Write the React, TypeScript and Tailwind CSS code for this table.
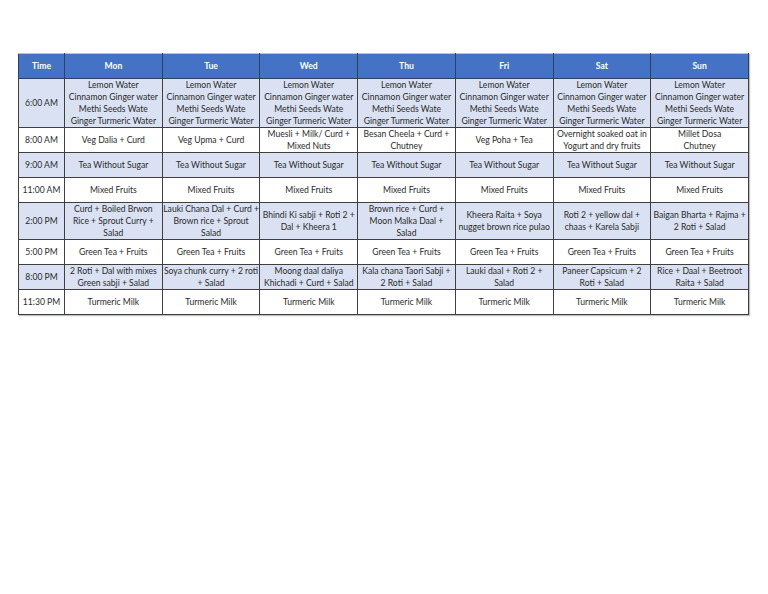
import React from 'react';

const days = ['Mon', 'Tue', 'Wed', 'Thu', 'Fri', 'Sat', 'Sun'];

const morningDrink = ['Lemon Water', 'Cinnamon Ginger water', 'Methi Seeds Wate', 'Ginger Turmeric Water'];

type Row = { time: string; h: string; shaded: boolean; cells: string[][] };

const rows: Row[] = [
  { time: '6:00 AM', h: 'h-[49px]', shaded: true, cells: days.map(() => morningDrink) },
  {
    time: '8:00 AM',
    h: 'h-[25px]',
    shaded: false,
    cells: [
      ['Veg Dalia + Curd'],
      ['Veg Upma + Curd'],
      ['Muesli + Milk/ Curd +', 'Mixed Nuts'],
      ['Besan Cheela + Curd +', 'Chutney'],
      ['Veg Poha + Tea'],
      ['Overnight soaked oat in', 'Yogurt and dry fruits'],
      ['Millet Dosa', 'Chutney'],
    ],
  },
  { time: '9:00 AM', h: 'h-[25px]', shaded: true, cells: days.map(() => ['Tea Without Sugar']) },
  { time: '11:00 AM', h: 'h-[25px]', shaded: false, cells: days.map(() => ['Mixed Fruits']) },
  {
    time: '2:00 PM',
    h: 'h-[37px]',
    shaded: true,
    cells: [
      ['Curd + Boiled Brwon', 'Rice + Sprout Curry +', 'Salad'],
      ['Lauki Chana Dal + Curd +', 'Brown rice + Sprout', 'Salad'],
      ['Bhindi Ki sabji + Roti 2 +', 'Dal + Kheera 1'],
      ['Brown rice + Curd +', 'Moon Malka Daal +', 'Salad'],
      ['Kheera Raita + Soya', 'nugget brown rice pulao'],
      ['Roti 2 + yellow dal +', 'chaas + Karela Sabji'],
      ['Baigan Bharta + Rajma +', '2 Roti + Salad'],
    ],
  },
  { time: '5:00 PM', h: 'h-[25px]', shaded: false, cells: days.map(() => ['Green Tea + Fruits']) },
  {
    time: '8:00 PM',
    h: 'h-[25px]',
    shaded: true,
    cells: [
      ['2 Roti + Dal with mixes', 'Green sabji + Salad'],
      ['Soya chunk curry + 2 roti', '+ Salad'],
      ['Moong daal daliya', 'Khichadi + Curd + Salad'],
      ['Kala chana Taori Sabji +', '2 Roti + Salad'],
      ['Lauki daal + Roti 2 +', 'Salad'],
      ['Paneer Capsicum + 2', 'Roti + Salad'],
      ['Rice + Daal + Beetroot', 'Raita + Salad'],
    ],
  },
  { time: '11:30 PM', h: 'h-[25px]', shaded: false, cells: days.map(() => ['Turmeric Milk']) },
];

const App: React.FC = () => {
  return (
    <div className="min-h-[594px] w-[768px] bg-white pt-[53px] pl-[18px] font-['Lato',sans-serif] text-[#2b2b2b]">
      <table className="w-[731px] table-fixed border-collapse border border-[#3f3f3f] text-[8.6px] leading-[12px] shadow-[1px_1px_1px_rgba(0,0,0,0.25)]">
        <colgroup>
          <col className="w-[46px]" />
          {days.map((d) => (
            <col key={d} />
          ))}
        </colgroup>
        <thead>
          <tr className="h-[25px] bg-[#4472c4] text-white">
            <th className="border border-[#2f3f5f] border-t-[#b9c2d0] font-bold">Time</th>
            {days.map((d) => (
              <th key={d} className="border border-[#2f3f5f] border-t-[#b9c2d0] font-bold">
                {d}
              </th>
            ))}
          </tr>
        </thead>
        <tbody>
          {rows.map((row) => (
            <tr key={row.time} className={`${row.h} ${row.shaded ? 'bg-[#d9e1f2]' : 'bg-white'}`}>
              <td className="border border-[#3f3f3f] p-0 text-center whitespace-nowrap">{row.time}</td>
              {row.cells.map((lines, i) => (
                <td key={i} className="border border-[#3f3f3f] p-0 text-center align-middle whitespace-nowrap overflow-hidden">
                  {lines.map((l, j) => (
                    <div key={j}>{l}</div>
                  ))}
                </td>
              ))}
            </tr>
          ))}
        </tbody>
      </table>
    </div>
  );
};

export default App;
